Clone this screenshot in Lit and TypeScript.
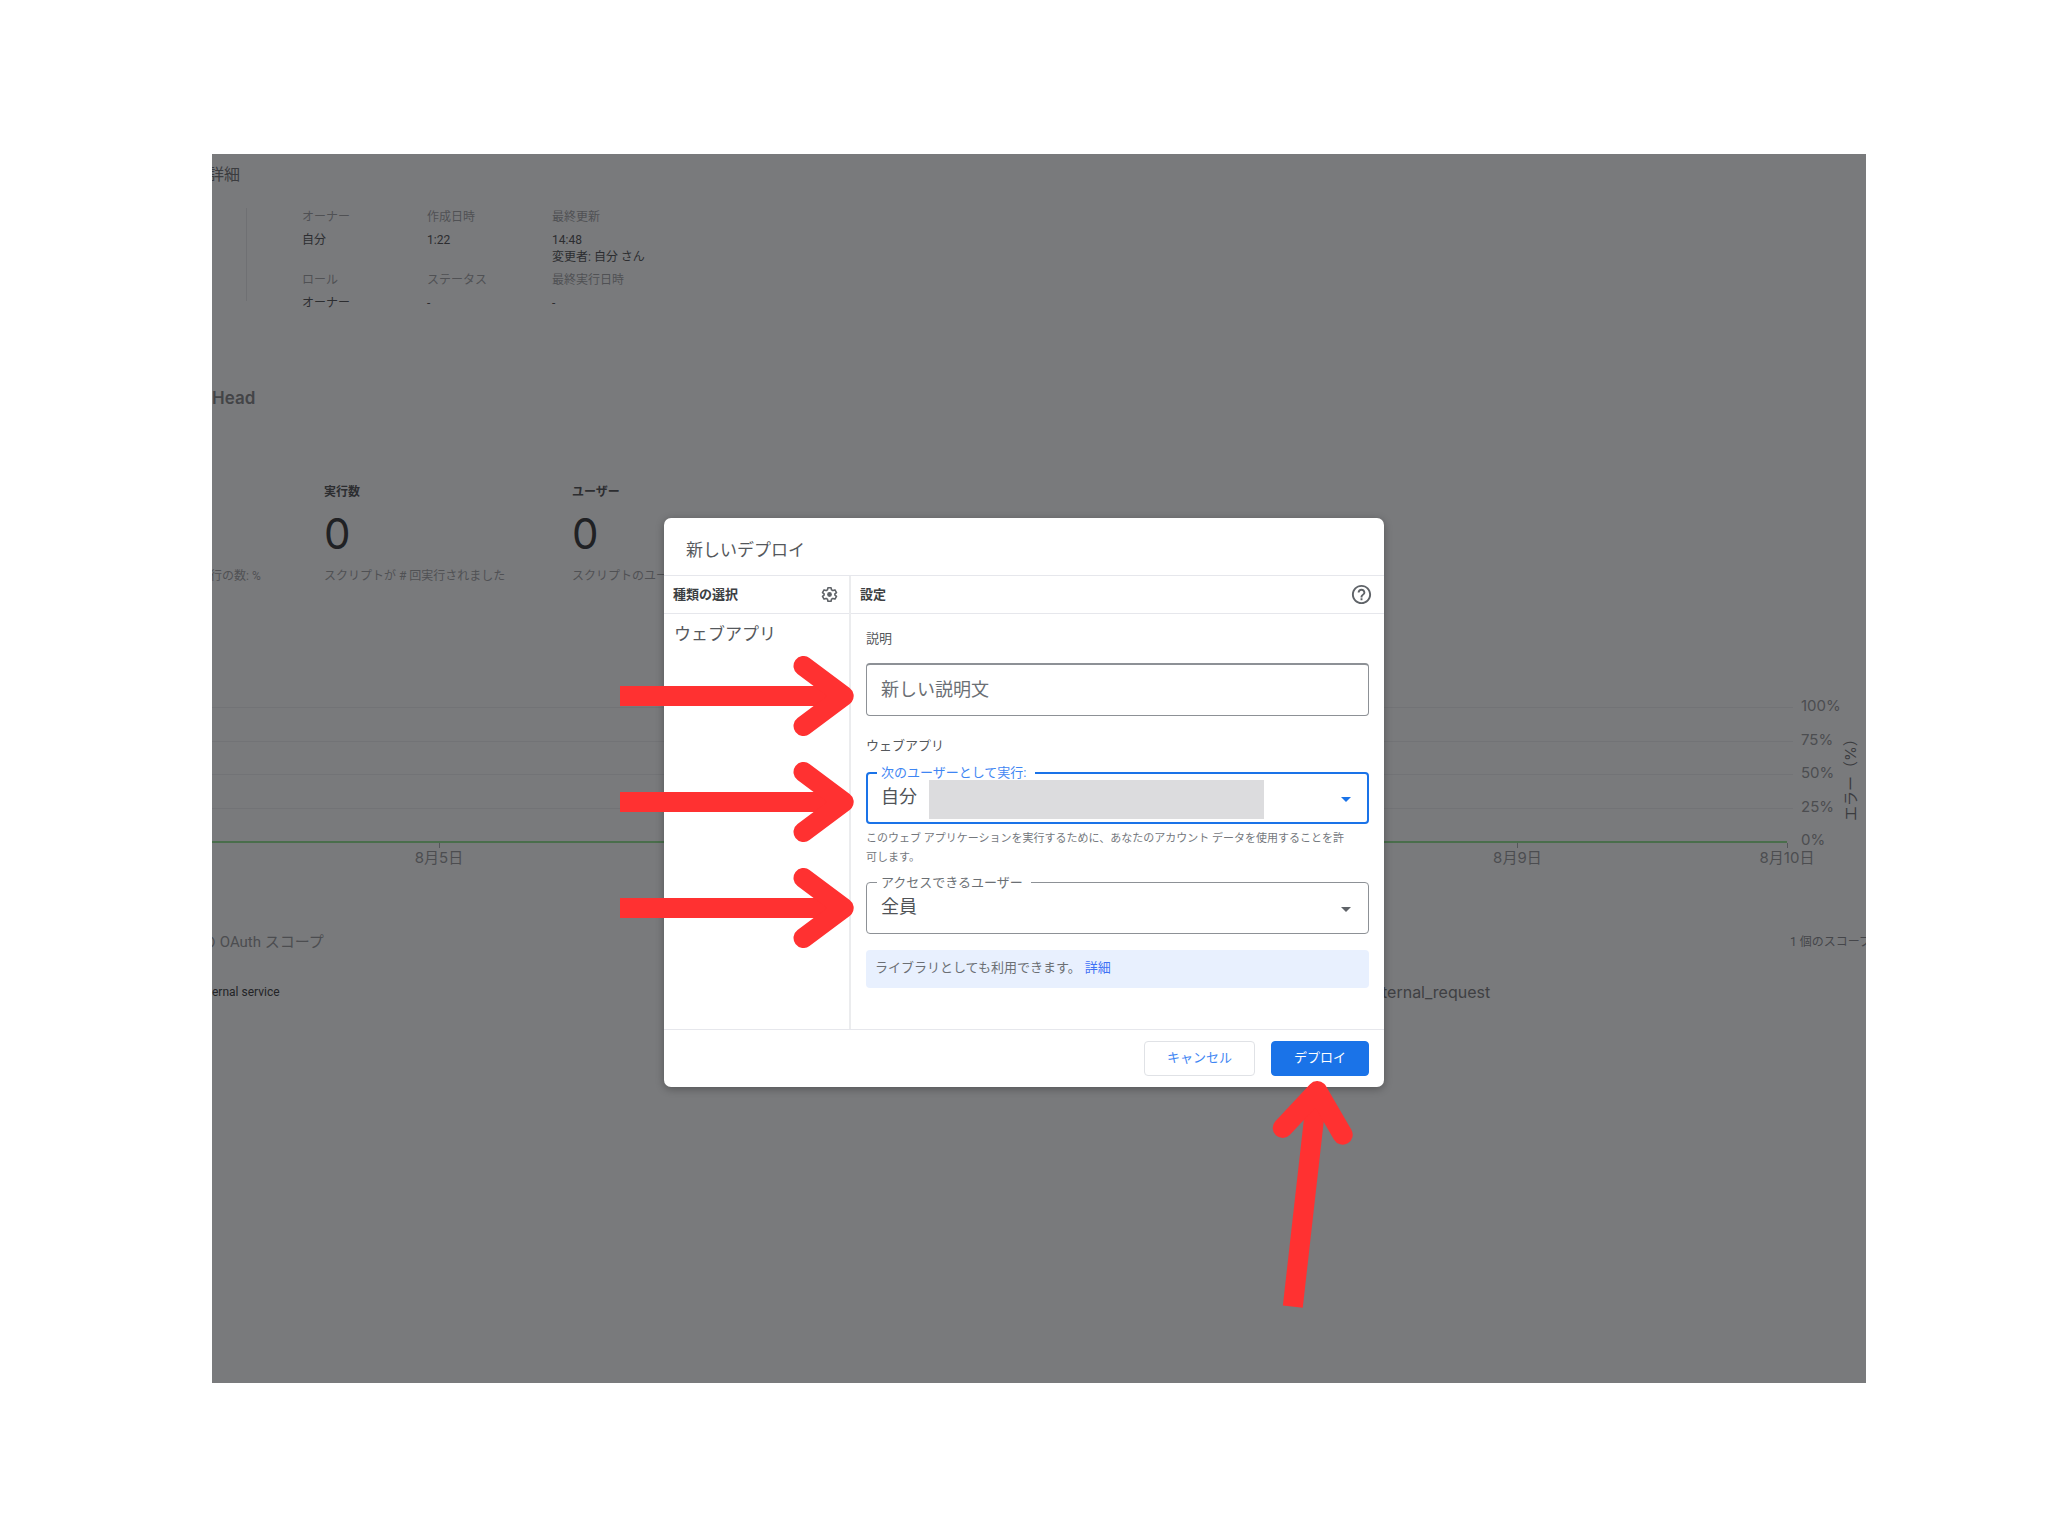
import { LitElement, html, css, svg } from "lit";
import { customElement, property } from "lit/decorators.js";

const gearIcon = svg`
  <circle cx="12" cy="12" r="3.4" fill="currentColor"/>
  <path fill="none" stroke="currentColor" stroke-width="2.2" stroke-linejoin="round"
    d="M9.8 2.4h4.4l.6 2.9 2 1.2 2.9-1 2.2 3.8-2.3 1.9v1.6l2.3 1.9-2.2 3.8-2.9-1-2 1.2-.6 2.9H9.8l-.6-2.9-2-1.2-2.9 1-2.2-3.8 2.3-1.9v-1.6L2.1 9.3l2.2-3.8 2.9 1 2-1.2z"/>`;

const helpIcon = svg`
  <path fill="currentColor"
    d="M11 18h2v-2h-2v2zm1-16C6.48 2 2 6.48 2 12s4.48 10 10 10 10-4.48 10-10S17.52 2 12 2zm0 18c-4.41 0-8-3.59-8-8s3.59-8 8-8 8 3.59 8 8-3.59 8-8 8zm0-14c-2.21 0-4 1.79-4 4h2c0-1.1.9-2 2-2s2 .9 2 2c0 2-3 1.75-3 5h2c0-2.25 3-2.5 3-5 0-2.21-1.79-4-4-4z"/>`;

const FONT = css`"Roboto", "Noto Sans CJK JP", sans-serif`;
const DISPLAY = css`"Inter", "Noto Sans CJK JP", sans-serif`;

@customElement("project-overview")
export class ProjectOverview extends LitElement {
  static styles = css`
    :host {
      display: block;
      flex: 1;
      overflow: hidden;
      background: #797a7c;
      color: #2c2d30;
      font: 12px/18px ${FONT};
    }
    h1, h2, h3, p, dl, dd { margin: 0; font-weight: 400; }
    .title { margin: 9px 0 0 -4px; font-size: 16px; line-height: 24px; color: #3b3c3f; }
    .facts {
      display: grid;
      grid-template-columns: repeat(3, 125px);
      margin: 21px 0 0 34px;
      padding-left: 55px;
      border-left: 1px solid #6f7073;
      height: 93px;
    }
    .fact { height: 63px; }
    dt { color: #505154; line-height: 18px; }
    dd { padding-top: 6px; line-height: 17px; }
    .version { margin-top: 84px; font: 600 17px/26px ${DISPLAY}; color: #434447; }
    .metrics {
      display: grid;
      grid-template-columns: 112px 248px 1fr;
      margin-top: 72px;
    }
    .metric { display: grid; grid-template-rows: 18px 66px 18px; align-items: center; white-space: nowrap; }
    .metric h3 { font-size: 12px; font-weight: 700; }
    .figure { font: 400 42px/44px ${DISPLAY}; color: #202124; }
    .note { grid-row: 3; color: #505154; }
    .clipped { margin-left: -2px; }
    .chart {
      display: grid;
      grid-template-columns: 1fr 43px 30px;
      margin-top: 122px;
      font: 400 15px/20px ${DISPLAY};
      color: #4c4d50;
    }
    .bands { display: grid; grid-template-rows: repeat(4, 1fr); height: 134px; }
    .band { border-top: 1px solid #727376; }
    .baseline { height: 2px; margin-right: 6px; background: #4a6e4c; }
    .percents { display: flex; flex-direction: column; justify-content: space-between; height: 154px; margin: -11px 0 0 8px; }
    .axis-name {
      writing-mode: vertical-rl;
      text-orientation: sideways;
      rotate: 180deg;
      justify-self: center;
      height: 84px;
      margin-top: 30px;
      font-size: 15px;
      color: #3b3c3f;
      white-space: nowrap;
    }
    .days { display: flex; margin: 0 6px 0 227px; }
    .day { width: 0; display: flex; flex-direction: column; align-items: center; white-space: nowrap; }
    .day::before { content: ""; width: 1px; height: 5px; background: #55565a; }
    .wide { flex: 4; }
    .narrow { flex: 1; }
    .row { display: flex; justify-content: space-between; align-items: center; white-space: nowrap; }
    .scopes { margin-top: 62px; }
    .scopes h2 { margin-left: -11px; font-size: 15px; line-height: 24px; color: #4c4d50; }
    .count { width: 76px; color: #45464a; }
    .scope { display: grid; grid-template-columns: 1170px 1fr; margin-top: 26px; align-items: center; }
    .scope code { font: 400 16px/24px ${DISPLAY}; color: #3f4043; }
    .scope p { color: #232427; }
  `;

  private facts = [
    ["オーナー", ["自分"]],
    ["作成日時", ["1:22"]],
    ["最終更新", ["14:48", "変更者: 自分 さん"]],
    ["ロール", ["オーナー"]],
    ["ステータス", ["-"]],
    ["最終実行日時", ["-"]],
  ] as const;

  render() {
    return html`
      <h1 class="title">詳細</h1>
      <dl class="facts">
        ${this.facts.map(
          ([name, lines]) => html`
            <div class="fact">
              <dt>${name}</dt>
              <dd>${lines.map((line) => html`<div>${line}</div>`)}</dd>
            </div>`
        )}
      </dl>
      <h2 class="version">Head</h2>
      <div class="metrics">
        <div class="metric"><p class="note clipped">行の数: %</p></div>
        <div class="metric">
          <h3>実行数</h3>
          <div class="figure">0</div>
          <p class="note">スクリプトが # 回実行されました</p>
        </div>
        <div class="metric">
          <h3>ユーザー</h3>
          <div class="figure">0</div>
          <p class="note">スクリプトのユー</p>
        </div>
      </div>
      <div class="chart">
        <div>
          <div class="bands">${[0, 1, 2, 3].map(() => html`<div class="band"></div>`)}</div>
          <div class="baseline"></div>
          <div class="days">
            <div class="day">8月5日</div>
            <div class="wide"></div>
            <div class="day">8月9日</div>
            <div class="narrow"></div>
            <div class="day">8月10日</div>
          </div>
        </div>
        <div class="percents">
          ${[100, 75, 50, 25, 0].map((n) => html`<span>${n}%</span>`)}
        </div>
        <div class="axis-name">エラー（%）</div>
      </div>
      <div class="row scopes">
        <h2>の OAuth スコープ</h2>
        <div class="count">1 個のスコープ</div>
      </div>
      <div class="scope">
        <p>ernal service</p>
        <code>ternal_request</code>
      </div>
    `;
  }
}

@customElement("outlined-select")
export class OutlinedSelect extends LitElement {
  @property() label = "";
  @property() value = "";
  @property({ type: Boolean, reflect: true }) active = false;
  @property({ type: Boolean }) masked = false;

  static styles = css`
    :host { display: block; position: relative; font-family: ${FONT}; --tone: #5f6368; --edge: #8d9196; }
    :host([active]) { --tone: #1a73e8; --edge: #1a73e8; }
    label {
      position: absolute;
      top: -9px;
      left: 11px;
      padding: 0 8px 0 4px;
      background: #fff;
      font-size: 13px;
      line-height: 20px;
      color: #6b6f74;
    }
    :host([active]) label { color: #3f86f3; }
    select {
      appearance: none;
      display: block;
      width: 100%;
      height: 52px;
      padding: 0 48px 2px 14px;
      border: 1px solid var(--edge);
      border-radius: 4px;
      outline: 0;
      background: #fff;
      font: 400 18px/26px ${FONT};
      color: #505357;
    }
    :host([active]) select { border-width: 2px; padding-left: 13px; }
    .caret { position: absolute; right: 18px; top: 25px; color: var(--tone); pointer-events: none; }
    .mask { position: absolute; left: 63px; right: 105px; top: 8px; height: 39px; background: #dcdcde; }
  `;

  render() {
    return html`
      <select id="choice"><option>${this.value}</option></select>
      <label for="choice">${this.label}</label>
      <svg class="caret" width="10" height="5" viewBox="0 0 10 5" aria-hidden="true">
        <path fill="currentColor" d="M0 0h10L5 5z"/>
      </svg>
      ${this.masked ? html`<div class="mask"></div>` : null}
    `;
  }
}

@customElement("deploy-dialog")
export class DeployDialog extends LitElement {
  static styles = css`
    :host {
      display: block;
      border-radius: 7px;
      background: #fff;
      box-shadow: 0 2px 8px rgba(0, 0, 0, 0.3);
      color: #55585c;
      font: 13px/20px ${FONT};
    }
    h2, h3, p { margin: 0; font-weight: 400; font-size: 13px; }
    .title { padding: 19px 22px 12px; border-bottom: 1px solid #e6e7ec; font-size: 17px; line-height: 26px; }
    .columns { display: grid; grid-template-columns: 187px 1fr; }
    .kinds { border-right: 2px solid #ebecee; }
    .bar {
      display: flex;
      justify-content: space-between;
      align-items: center;
      height: 37px;
      padding: 0 11px 0 9px;
      border-bottom: 1px solid #e6e7ec;
    }
    .bar h3 { font-weight: 700; color: #3c4043; }
    button { font: inherit; cursor: pointer; }
    .icon { display: flex; padding: 0; border: 0; background: none; color: #5f6368; }
    .kind { padding: 7px 10px; font-size: 17px; line-height: 26px; }
    .form { padding: 15px 15px 41px; }
    .form label { display: block; }
    input {
      display: block;
      box-sizing: border-box;
      width: 100%;
      height: 53px;
      margin: 14px 0 20px;
      padding: 0 14px 1px;
      border: 1px solid #8d9196;
      border-top-width: 2px;
      border-radius: 4px;
      outline: 0;
      font: 400 18px/26px ${FONT};
    }
    input::placeholder { color: #6b6f74; opacity: 1; }
    .user { margin-top: 16px; }
    .help { margin: 5px 0 15px; font-size: 11px; line-height: 19px; color: #74787d; white-space: nowrap; }
    .info {
      display: flex;
      gap: 4px;
      margin-top: 16px;
      padding: 8px 9px 10px;
      border-radius: 4px;
      background: #e8f0fe;
      color: #6b6f74;
    }
    .info a { color: #3f71f5; text-decoration: none; }
    .footer {
      display: flex;
      justify-content: flex-end;
      gap: 16px;
      padding: 11px 15px;
      border-top: 1px solid #e6e7ec;
    }
    .action { height: 35px; padding: 0 22px 2px; border: 1px solid #e0e2e6; border-radius: 4px; background: #fff; color: #3f86f3; }
    .primary { border-color: #1a73e8; background: #1a73e8; color: #fff; }
  `;

  render() {
    return html`
      <h2 class="title">新しいデプロイ</h2>
      <div class="columns">
        <section class="kinds">
          <div class="bar">
            <h3>種類の選択</h3>
            <button class="icon" aria-label="設定">
              <svg width="17" height="17" viewBox="0 0 24 24">${gearIcon}</svg>
            </button>
          </div>
          <p class="kind">ウェブアプリ</p>
        </section>
        <section>
          <div class="bar">
            <h3>設定</h3>
            <button class="icon" aria-label="ヘルプ">
              <svg width="23" height="23" viewBox="0 0 24 24">${helpIcon}</svg>
            </button>
          </div>
          <div class="form">
            <label for="description">説明</label>
            <input id="description" placeholder="新しい説明文" />
            <h3>ウェブアプリ</h3>
            <outlined-select class="user" active masked label="次のユーザーとして実行:" value="自分"></outlined-select>
            <p class="help">このウェブ アプリケーションを実行するために、あなたのアカウント データを使用することを許<br />可します。</p>
            <outlined-select label="アクセスできるユーザー" value="全員"></outlined-select>
            <p class="info">ライブラリとしても利用できます。<a href="#">詳細</a></p>
          </div>
        </section>
      </div>
      <footer class="footer">
        <button class="action">キャンセル</button>
        <button class="action primary">デプロイ</button>
      </footer>
    `;
  }
}

@customElement("app-root")
export class AppRoot extends LitElement {
  static styles = css`
    :host {
      display: flex;
      flex-direction: column;
      position: relative;
      box-sizing: border-box;
      min-height: 100vh;
      padding: 154px 182px 153px 212px;
      background: #fff;
    }
    .layer { position: absolute; top: 518px; left: 0; right: 0; width: 720px; margin: 0 auto; }
    .arrow { position: absolute; left: -44px; fill: none; stroke: #ff3131; stroke-width: 20; stroke-linejoin: round; }
    .head { stroke-linecap: round; }
    .first { top: 138px; }
    .second { top: 244px; }
    .third { top: 350px; }
    .up { left: 606px; top: 562px; }
  `;

  render() {
    const pointer = (place: string) => html`
      <svg class="arrow ${place}" width="236" height="80" viewBox="0 0 236 80" aria-hidden="true">
        <path d="M0 40H222"/>
        <path class="head" d="M183.5 10L223.7 40L183.5 70"/>
      </svg>`;
    return html`
      <project-overview></project-overview>
      <div class="layer">
        <deploy-dialog></deploy-dialog>
        ${["first", "second", "third"].map(pointer)}
        <svg class="arrow up" width="86" height="232" viewBox="0 0 86 232" aria-hidden="true">
          <path d="M22.8 226.7L46.8 14"/>
          <path class="head" d="M12.7 48L47.3 11L72.7 54.7"/>
        </svg>
      </div>
    `;
  }
}
